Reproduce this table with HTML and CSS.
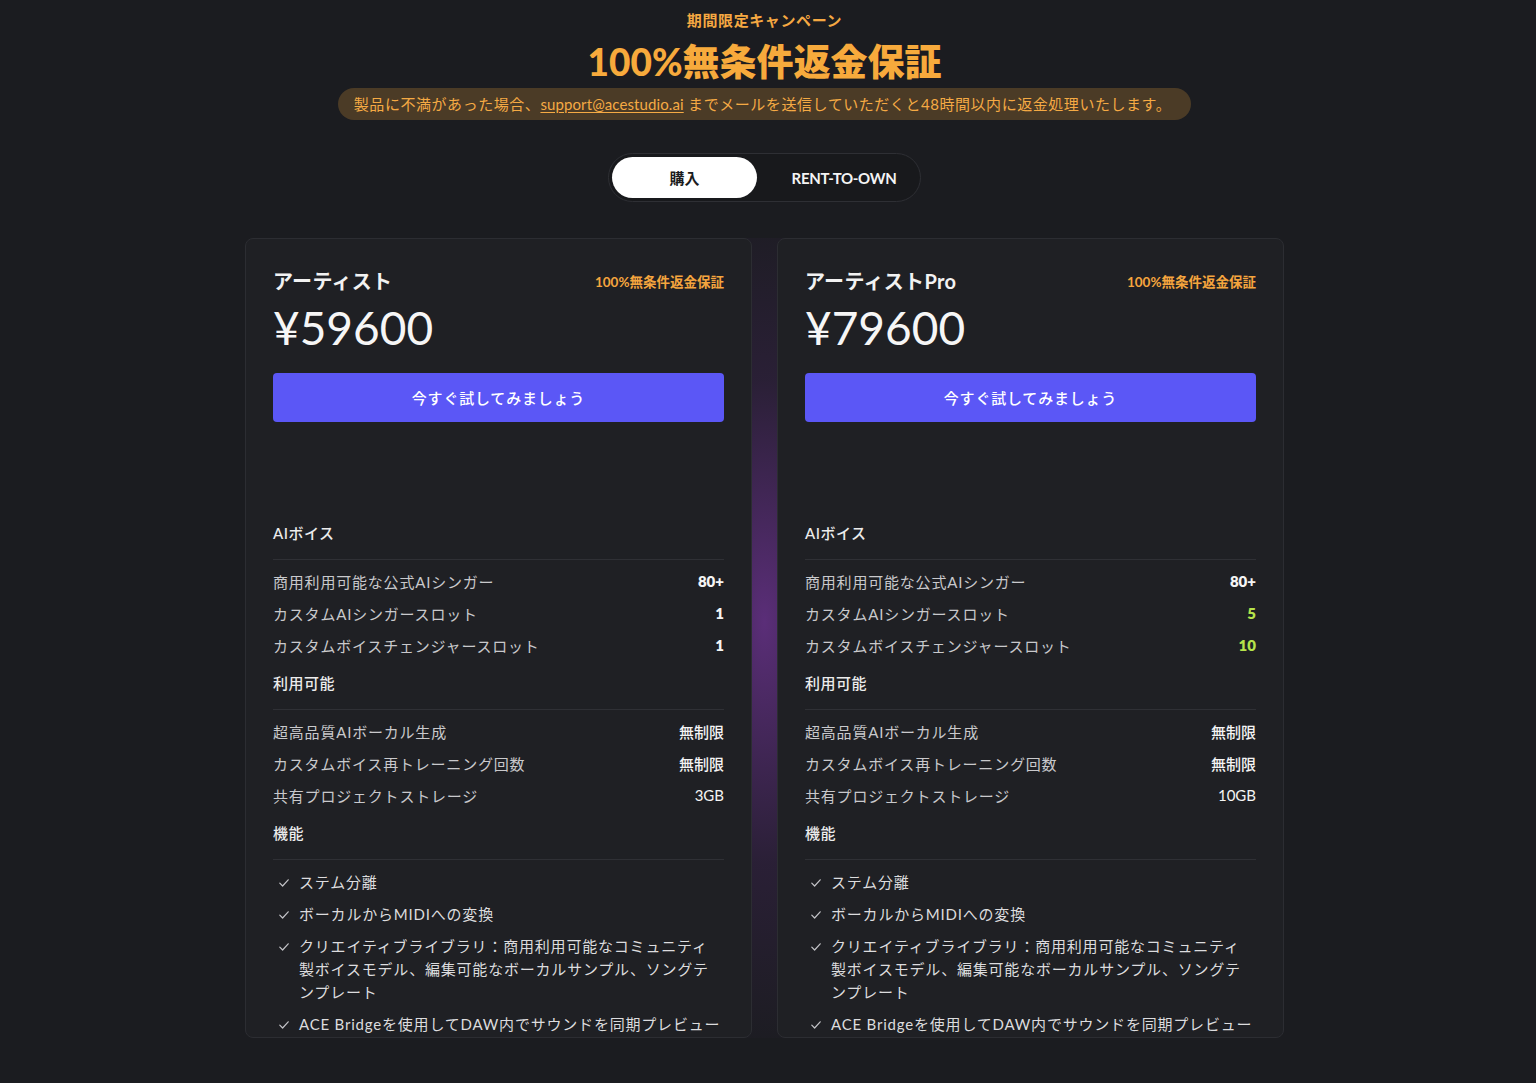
FILE: index.html
```html
<!DOCTYPE html>
<html lang="ja">
<head>
<meta charset="utf-8">
<title>料金プラン</title>
<link rel="stylesheet" href="styles.css">
</head>
<body>
<main class="page">
  <header class="hero">
    <p class="kicker">期間限定キャンペーン</p>
    <h1 class="hero-title">100%無条件返金保証</h1>
    <p class="notice">製品に不満があった場合、<a class="mail" href="#">support@acestudio.ai</a> までメールを送信していただくと48時間以内に返金処理いたします。</p>
  </header>

  <div class="toggle">
    <button class="seg seg-active">購入</button>
    <button class="seg seg-rent">RENT-TO-OWN</button>
  </div>

  <div class="plans">
    <section class="card">
      <div class="card-head">
        <h2 class="plan-name">アーティスト</h2>
        <span class="badge">100%無条件返金保証</span>
      </div>
      <div class="price">¥59600</div>
      <a class="cta" href="#">今すぐ試してみましょう</a>

      <div class="group first">
        <h3 class="group-title">AIボイス</h3>
        <ul class="rows">
          <li><span>商用利用可能な公式AIシンガー</span><span class="val bold">80+</span></li>
          <li><span>カスタムAIシンガースロット</span><span class="val bold">1</span></li>
          <li><span>カスタムボイスチェンジャースロット</span><span class="val bold">1</span></li>
        </ul>
      </div>
      <div class="group">
        <h3 class="group-title">利用可能</h3>
        <ul class="rows">
          <li><span>超高品質AIボーカル生成</span><span class="val med">無制限</span></li>
          <li><span>カスタムボイス再トレーニング回数</span><span class="val med">無制限</span></li>
          <li><span>共有プロジェクトストレージ</span><span class="val">3GB</span></li>
        </ul>
      </div>
      <div class="group">
        <h3 class="group-title">機能</h3>
        <ul class="checks">
          <li><svg class="chk" viewBox="0 0 10 8"><polyline points="0.8,4.2 3.6,7 9.2,0.8"/></svg><span>ステム分離</span></li>
          <li><svg class="chk" viewBox="0 0 10 8"><polyline points="0.8,4.2 3.6,7 9.2,0.8"/></svg><span>ボーカルからMIDIへの変換</span></li>
          <li><svg class="chk" viewBox="0 0 10 8"><polyline points="0.8,4.2 3.6,7 9.2,0.8"/></svg><span>クリエイティブライブラリ：商用利用可能なコミュニティ製ボイスモデル、編集可能なボーカルサンプル、ソングテンプレート</span></li>
          <li><svg class="chk" viewBox="0 0 10 8"><polyline points="0.8,4.2 3.6,7 9.2,0.8"/></svg><span>ACE Bridgeを使用してDAW内でサウンドを同期プレビュー</span></li>
        </ul>
      </div>
    </section>

    <section class="card">
      <div class="card-head">
        <h2 class="plan-name">アーティストPro</h2>
        <span class="badge">100%無条件返金保証</span>
      </div>
      <div class="price">¥79600</div>
      <a class="cta" href="#">今すぐ試してみましょう</a>

      <div class="group first">
        <h3 class="group-title">AIボイス</h3>
        <ul class="rows">
          <li><span>商用利用可能な公式AIシンガー</span><span class="val bold">80+</span></li>
          <li><span>カスタムAIシンガースロット</span><span class="val bold lime">5</span></li>
          <li><span>カスタムボイスチェンジャースロット</span><span class="val bold lime">10</span></li>
        </ul>
      </div>
      <div class="group">
        <h3 class="group-title">利用可能</h3>
        <ul class="rows">
          <li><span>超高品質AIボーカル生成</span><span class="val med">無制限</span></li>
          <li><span>カスタムボイス再トレーニング回数</span><span class="val med">無制限</span></li>
          <li><span>共有プロジェクトストレージ</span><span class="val">10GB</span></li>
        </ul>
      </div>
      <div class="group">
        <h3 class="group-title">機能</h3>
        <ul class="checks">
          <li><svg class="chk" viewBox="0 0 10 8"><polyline points="0.8,4.2 3.6,7 9.2,0.8"/></svg><span>ステム分離</span></li>
          <li><svg class="chk" viewBox="0 0 10 8"><polyline points="0.8,4.2 3.6,7 9.2,0.8"/></svg><span>ボーカルからMIDIへの変換</span></li>
          <li><svg class="chk" viewBox="0 0 10 8"><polyline points="0.8,4.2 3.6,7 9.2,0.8"/></svg><span>クリエイティブライブラリ：商用利用可能なコミュニティ製ボイスモデル、編集可能なボーカルサンプル、ソングテンプレート</span></li>
          <li><svg class="chk" viewBox="0 0 10 8"><polyline points="0.8,4.2 3.6,7 9.2,0.8"/></svg><span>ACE Bridgeを使用してDAW内でサウンドを同期プレビュー</span></li>
        </ul>
      </div>
    </section>
  </div>
</main>
</body>
</html>
```

FILE: styles.css
```css
* { box-sizing: border-box; }

html, body {
  margin: 0;
  padding: 0;
  background: #1b1c20;
  height: 100%;
  overflow: hidden;
}

body {
  font-family: "Lato", "Noto Sans CJK JP", sans-serif;
  color: #e6e6e8;
}

.page {
  width: 1529px;
  display: flex;
  flex-direction: column;
  align-items: center;
  padding-top: 10px;
}

.hero {
  display: flex;
  flex-direction: column;
  align-items: center;
}

.kicker {
  margin: 0;
  font-size: 15px;
  line-height: 20px;
  font-weight: 700;
  color: #f5a842;
  letter-spacing: 0.6px;
}

.hero-title {
  margin: 10px 0 0;
  font-size: 37px;
  line-height: 44px;
  font-weight: 900;
  color: #f7aa3c;
}

.notice {
  margin: 4px 0 0;
  height: 32px;
  line-height: 32px;
  padding: 0 20px 0 16px;
  border-radius: 16px;
  background: #4b3b26;
  color: #f5aa44;
  font-size: 15px;
  letter-spacing: 0.55px;
  white-space: nowrap;
}

.mail {
  color: #f5aa44;
  text-decoration: underline;
  text-underline-offset: 2px;
  letter-spacing: 0.1px;
}

.toggle {
  margin-top: 33px;
  width: 313px;
  height: 49px;
  padding: 3px;
  border: 1px solid #2e2f34;
  border-radius: 25px;
  background: #18191c;
  display: flex;
  align-items: center;
}

.seg {
  height: 41px;
  border: 0;
  border-radius: 21px;
  background: transparent;
  font-family: "Lato", "Noto Sans CJK JP", sans-serif;
  font-size: 15px;
  font-weight: 700;
  display: flex;
  align-items: center;
  justify-content: center;
  padding: 0;
}

.seg-active {
  width: 145px;
  background: #ffffff;
  color: #1b1c20;
}

.seg-rent {
  width: 160px;
  padding-left: 14px;
  color: #f4f4f4;
  letter-spacing: -0.3px;
}

.plans {
  margin-top: 36px;
  display: flex;
  gap: 25px;
  background: radial-gradient(ellipse 160px 440px at 50% 48%, rgba(112, 52, 150, 0.75), rgba(80, 40, 110, 0.28) 55%, rgba(27, 28, 32, 0) 100%);
}

.card {
  width: 507px;
  height: 800px;
  overflow: hidden;
  background: #1f2024;
  border: 1px solid #2c2d32;
  border-radius: 8px;
  padding: 28px 27px 0 27px;
}

.card-head {
  display: flex;
  justify-content: space-between;
  align-items: center;
  height: 28px;
}

.plan-name {
  margin: 0;
  font-size: 20px;
  line-height: 28px;
  font-weight: 700;
  color: #f2f2f2;
  letter-spacing: 0.3px;
}

.badge {
  font-size: 13.5px;
  font-weight: 700;
  color: #f5a53e;
}

.price {
  margin-top: 7px;
  font-size: 46px;
  line-height: 52px;
  font-weight: 400;
  color: #f6f6f6;
}

.cta {
  margin-top: 19px;
  height: 49px;
  display: flex;
  align-items: center;
  justify-content: center;
  background: #5b57f6;
  border-radius: 4px;
  color: #ffffff;
  text-decoration: none;
  font-size: 15px;
  font-weight: 500;
  letter-spacing: 0.8px;
}

.group { margin-top: 10px; }
.group.first { margin-top: 99px; }

.group-title {
  margin: 0;
  font-size: 15px;
  line-height: 24px;
  font-weight: 500;
  color: #ececec;
  padding-bottom: 14px;
  border-bottom: 1px solid #2f3035;
  letter-spacing: 0.5px;
}

.rows, .checks {
  list-style: none;
  margin: 0;
  padding: 5px 0 0;
}

.checks { padding-top: 6px; }

.rows li {
  display: flex;
  justify-content: space-between;
  align-items: center;
  height: 32px;
  font-size: 15px;
  color: #c9c9cc;
  letter-spacing: 0.8px;
}

.val {
  color: #f4f4f4;
  letter-spacing: 0;
}
.val.bold { font-weight: 800; }
.val.med { font-weight: 500; }
.val.lime { color: #b6e34b; }

.checks li {
  display: flex;
  align-items: flex-start;
  padding: 4.5px 0;
  font-size: 15px;
  line-height: 23px;
  color: #dcdcde;
  letter-spacing: 0.8px;
}

.chk {
  flex: 0 0 auto;
  width: 10px;
  height: 8px;
  margin: 8px 10px 0 6px;
  fill: none;
  stroke: #c4c4c8;
  stroke-width: 1.2;
  stroke-linecap: round;
  stroke-linejoin: round;
}

.checks li span { width: 422px; }
```
